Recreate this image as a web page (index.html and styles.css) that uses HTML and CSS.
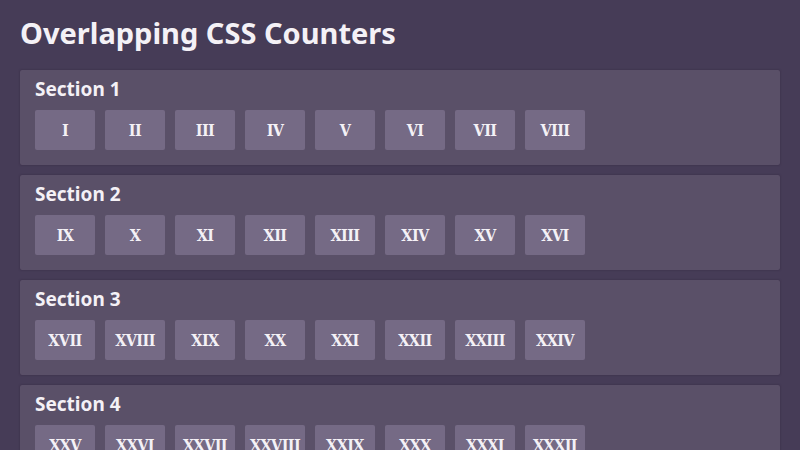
FILE: index.html
```html
<!DOCTYPE html>
<html lang="en">
<head>
<meta charset="utf-8">
<title>Overlapping CSS Counters</title>
<link rel="stylesheet" href="styles.css">
</head>
<body>
<main class="page">
  <h1 class="title">Overlapping CSS Counters</h1>
  <section class="group">
    <h2 class="group-title">Section 1</h2>
    <ol class="items">
      <li>I</li><li>II</li><li>III</li><li>IV</li><li>V</li><li>VI</li><li>VII</li><li>VIII</li>
    </ol>
  </section>
  <section class="group">
    <h2 class="group-title">Section 2</h2>
    <ol class="items">
      <li>IX</li><li>X</li><li>XI</li><li>XII</li><li>XIII</li><li>XIV</li><li>XV</li><li>XVI</li>
    </ol>
  </section>
  <section class="group">
    <h2 class="group-title">Section 3</h2>
    <ol class="items">
      <li>XVII</li><li>XVIII</li><li>XIX</li><li>XX</li><li>XXI</li><li>XXII</li><li>XXIII</li><li>XXIV</li>
    </ol>
  </section>
  <section class="group">
    <h2 class="group-title">Section 4</h2>
    <ol class="items">
      <li>XXV</li><li>XXVI</li><li>XXVII</li><li>XXVIII</li><li>XXIX</li><li>XXX</li><li>XXXI</li><li>XXXII</li>
    </ol>
  </section>
</main>
</body>
</html>
```
FILE: styles.css
```css
html, body {
  margin: 0;
  padding: 0;
}

body {
  background: #463c57;
  color: #f4f1f6;
  font-family: "Noto Sans", "Open Sans", sans-serif;
}

.page {
  padding: 12px 20px 20px;
  display: flex;
  flex-direction: column;
  gap: 10px;
}

.title {
  margin: 0 0 7px;
  font-size: 29px;
  line-height: 41px;
  font-weight: 700;
}

.group {
  background: #5a5068;
  border-radius: 2px;
  box-shadow: 0 0 2px rgba(40, 32, 52, 0.6);
  padding: 7px 15px 15px;
}

.group-title {
  margin: 0 0 8px;
  font-size: 19px;
  line-height: 25px;
  font-weight: 700;
}

.items {
  list-style: none;
  margin: 0;
  padding: 0;
  display: flex;
  gap: 10px;
}

.items li {
  width: 60px;
  height: 40px;
  display: flex;
  align-items: center;
  justify-content: center;
  background: #756a85;
  border-radius: 2px;
  font-family: "DejaVu Serif", serif;
  font-stretch: semi-condensed;
  font-weight: 700;
  font-size: 16px;
  letter-spacing: -0.6px;
}
```
